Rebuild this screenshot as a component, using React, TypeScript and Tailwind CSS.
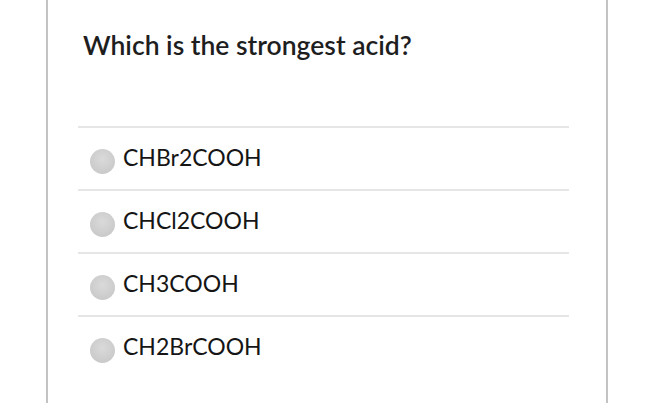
import React from 'react';

const options = ['CHBr2COOH', 'CHCl2COOH', 'CH3COOH', 'CH2BrCOOH'];

// Radio disc — plain grey, no checked state
function Radio() {
    return (
        <span className="inline-block w-[25px] h-[25px] mt-[5px] rounded-full bg-[radial-gradient(circle_at_50%_40%,#dadada,#c4c4c4)] shrink-0" />
    );
}

export default function App() {
    return (
        <div className="w-[653px] h-[403px] bg-white overflow-hidden" style={{ fontFamily: 'Lato, "Open Sans", sans-serif' }}>
            <div className="ml-[46px] w-[562px] h-[403px] border-x-2 border-[#c3c3c3] pl-[30px] pr-[37px]">
                <h1 className="pt-[29px] pl-[5px] text-[26.5px] font-semibold text-[#1e1e1e] leading-[32px] h-[126px]">
                    Which is the strongest acid?
                </h1>
                <ul>
                    {options.map((opt) => (
                        <li key={opt} className="border-t-2 border-[#e6e6e6] h-[63px] flex items-center gap-[8px] pl-[12px]">
                            <Radio />
                            <span className="text-[23px] text-[#151515] mb-[2px]">{opt}</span>
                        </li>
                    ))}
                </ul>
            </div>
        </div>
    );
}
